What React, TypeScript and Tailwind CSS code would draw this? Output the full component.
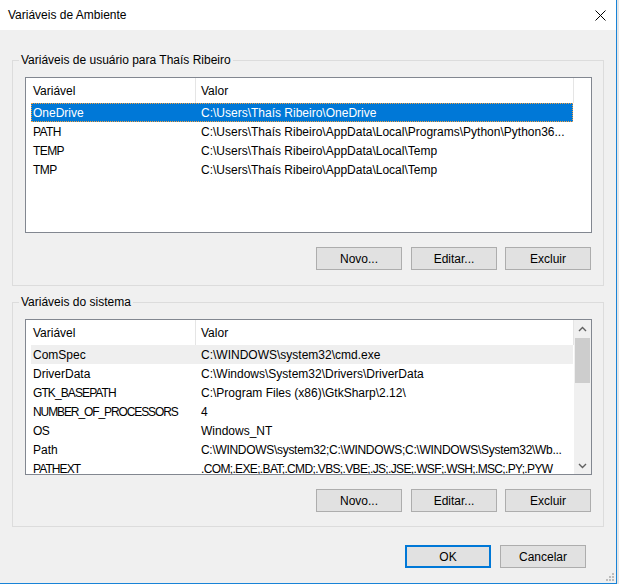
import React from 'react';

type Row = {
  name: string;
  value: string;
  selected?: boolean;
  hover?: boolean;
  nameClass?: string;
  valueClass?: string;
};

const userVars: Row[] = [
  { name: 'OneDrive', value: String.raw`C:\Users\Thaís Ribeiro\OneDrive`, selected: true },
  { name: 'PATH', value: String.raw`C:\Users\Thaís Ribeiro\AppData\Local\Programs\Python\Python36...`, nameClass: 'tracking-[-0.6px]' },
  { name: 'TEMP', value: String.raw`C:\Users\Thaís Ribeiro\AppData\Local\Temp`, nameClass: 'tracking-[-0.6px]' },
  { name: 'TMP', value: String.raw`C:\Users\Thaís Ribeiro\AppData\Local\Temp`, nameClass: 'tracking-[-0.6px]' },
];

const systemVars: Row[] = [
  { name: 'ComSpec', value: String.raw`C:\WINDOWS\system32\cmd.exe`, hover: true },
  { name: 'DriverData', value: String.raw`C:\Windows\System32\Drivers\DriverData` },
  { name: 'GTK_BASEPATH', value: String.raw`C:\Program Files (x86)\GtkSharp\2.12\ `, nameClass: 'tracking-[-0.9px]' },
  { name: 'NUMBER_OF_PROCESSORS', value: '4', nameClass: 'tracking-[-1.1px]' },
  { name: 'OS', value: 'Windows_NT', nameClass: 'tracking-[-0.6px]' },
  { name: 'Path', value: String.raw`C:\WINDOWS\system32;C:\WINDOWS;C:\WINDOWS\System32\Wb...`, valueClass: 'tracking-[-0.3px]' },
  { name: 'PATHEXT', value: '.COM;.EXE;.BAT;.CMD;.VBS;.VBE;.JS;.JSE;.WSF;.WSH;.MSC;.PY;.PYW', nameClass: 'tracking-[-0.9px]', valueClass: 'tracking-[-0.65px]' },
];

function Header() {
  return (
    <div className="flex h-[25px] shrink-0">
      <div className="w-[170px] border-r border-[#e5e5e5] pl-[7px] flex items-center">Variável</div>
      <div className="w-[378px] border-r border-[#e5e5e5] pl-[5px] flex items-center">Valor</div>
    </div>
  );
}

function Rows({ rows }: { rows: Row[] }) {
  return (
    <div className="flex flex-col">
      {rows.map((r) => (
        <div
          key={r.name}
          className={
            'ml-[5px] w-[542px] h-[19px] shrink-0 flex items-center whitespace-nowrap ' +
            (r.selected
              ? 'bg-[#0078d7] text-white outline-1 outline-dotted outline-[#f7a13e] -outline-offset-1'
              : r.hover
                ? 'bg-[#efefef]'
                : '')
          }
        >
          <div className={'w-[165px] pl-[2px] overflow-hidden ' + (r.nameClass ?? '')}>{r.name}</div>
          <div className={'flex-1 pl-[5px] overflow-hidden ' + (r.valueClass ?? '')}>{r.value}</div>
        </div>
      ))}
    </div>
  );
}

function Chevron({ up }: { up?: boolean }) {
  return (
    <svg width="9" height="6" viewBox="0 0 9 6" fill="none">
      <path
        d={up ? 'M1 5 L4.5 1.5 L8 5' : 'M1 1 L4.5 4.5 L8 1'}
        stroke="#606060"
        strokeWidth="1.4"
      />
    </svg>
  );
}

function Button({ children, primary }: { children: React.ReactNode; primary?: boolean }) {
  return (
    <div
      className={
        'w-[86px] h-[23px] bg-[#e1e1e1] flex items-center justify-center ' +
        (primary ? 'border-2 border-[#0078d7]' : 'border border-[#adadad]')
      }
    >
      {children}
    </div>
  );
}

function ButtonRow() {
  return (
    <div className="mt-[14px] flex justify-end mr-[1px]">
      <div className="mr-[9px]">
        <Button>Novo...</Button>
      </div>
      <div className="mr-[8px]">
        <Button>Editar...</Button>
      </div>
      <Button>Excluir</Button>
    </div>
  );
}

export default function App() {
  return (
    <div className="w-[619px] h-[584px] bg-[#e6e6e6] text-[12px] text-black font-['Segoe_UI','Liberation_Sans',Arial,sans-serif]">
      <div className="relative w-[617px] h-[584px] bg-[#f0f0f0] border-r border-b border-[#1883d7] flex flex-col">
        {/* Title bar */}
        <div className="h-[30px] bg-white flex items-center justify-between pl-[8px] pr-[10px] shrink-0">
          <span>Variáveis de Ambiente</span>
          <svg width="11" height="11" viewBox="0 0 11 11" fill="none">
            <path d="M0.5 0.5 L10.5 10.5 M10.5 0.5 L0.5 10.5" stroke="#000" strokeWidth="1" />
          </svg>
        </div>

        <div className="px-[12px] pt-[22px] flex flex-col">
          {/* User variables */}
          <fieldset className="border border-[#dcdcdc] pl-[12px] pr-[11px] pt-[8px] pb-[15px]">
            <legend className="-ml-[6px] px-[2px] leading-[17px]">Variáveis de usuário para Thaís Ribeiro</legend>
            <div className="w-[567px] h-[156px] bg-white border border-[#828790] flex flex-col overflow-hidden">
              <Header />
              <Rows rows={userVars} />
            </div>
            <ButtonRow />
          </fieldset>

          {/* System variables */}
          <fieldset className="mt-[8px] border border-[#dcdcdc] pl-[12px] pr-[11px] pt-[8px] pb-[14px]">
            <legend className="-ml-[6px] px-[2px] leading-[17px]">Variáveis do sistema</legend>
            <div className="w-[567px] h-[156px] bg-white border border-[#828790] flex overflow-hidden">
              <div className="w-[548px] flex flex-col overflow-hidden">
                <Header />
                <Rows rows={systemVars} />
              </div>
              <div className="w-[17px] bg-[#f0f0f0] flex flex-col">
                <div className="h-[17px] flex items-center justify-center">
                  <Chevron up />
                </div>
                <div className="mt-[1px] mx-[1px] h-[45px] bg-[#cdcdcd]" />
                <div className="flex-1" />
                <div className="h-[17px] flex items-center justify-center">
                  <Chevron />
                </div>
              </div>
            </div>
            <ButtonRow />
          </fieldset>

          {/* OK / Cancel */}
          <div className="mt-[18px] flex justify-end pr-[18px]">
            <div className="mr-[9px]">
              <Button primary>OK</Button>
            </div>
            <Button>Cancelar</Button>
          </div>
        </div>

        {/* resize grip */}
        <svg className="absolute right-[2px] bottom-[2px]" width="10" height="10" viewBox="0 0 10 10">
          {[
            [8, 0],
            [8, 3],
            [5, 3],
            [8, 6],
            [5, 6],
            [2, 6],
          ].map(([x, y]) => (
            <rect key={`${x}-${y}`} x={x} y={y + 2} width="2" height="2" fill="#bcbcbc" />
          ))}
        </svg>
      </div>
    </div>
  );
}
